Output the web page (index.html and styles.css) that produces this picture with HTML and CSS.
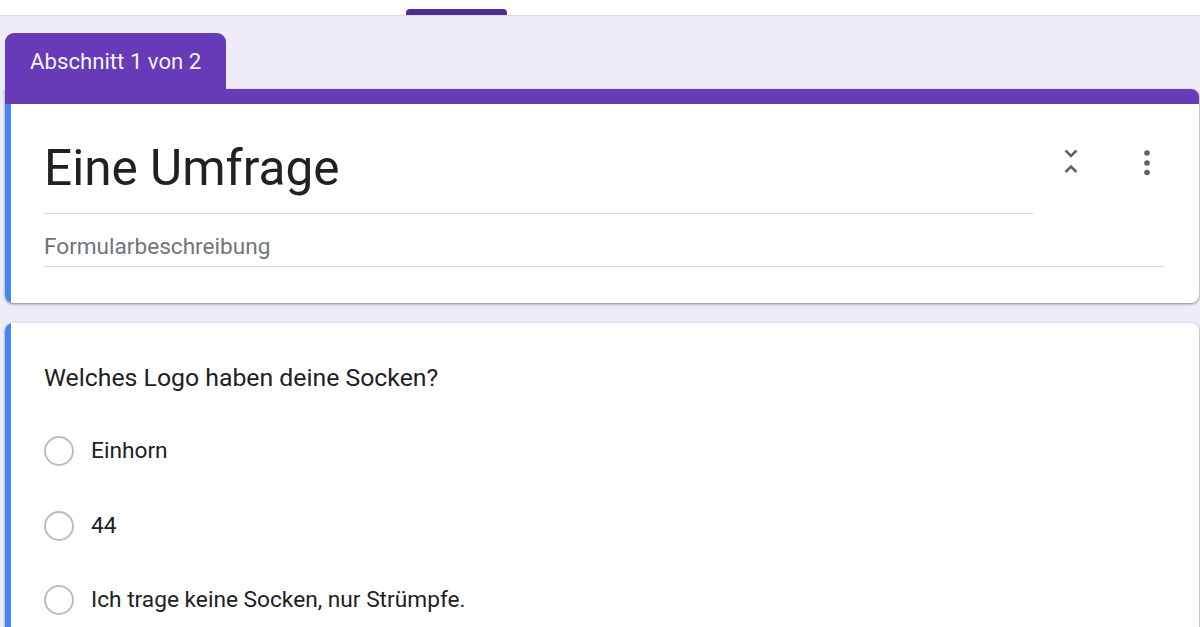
FILE: index.html
```html
<!DOCTYPE html>
<html lang="de">
<head>
<meta charset="utf-8">
<title>Eine Umfrage</title>
<link rel="stylesheet" href="styles.css">
</head>
<body>
<header class="topbar">
  <div class="indicator"></div>
</header>
<main class="form">
  <div class="tab">Abschnitt 1 von 2</div>
  <section class="card head-card">
    <div class="bar"></div>
    <div class="card-body head-body">
      <div class="title-row">
        <div class="title-field">Eine Umfrage</div>
        <div class="icons">
          <svg class="icon" width="24" height="32" viewBox="0 0 24 32" aria-hidden="true">
            <path d="M6.5 2.5 L12 8 L17.5 2.5" fill="none" stroke="#5f6368" stroke-width="2.6"/>
            <path d="M6.5 24 L12 18.5 L17.5 24" fill="none" stroke="#5f6368" stroke-width="2.6"/>
          </svg>
          <svg class="icon" width="10" height="32" viewBox="0 0 10 32" aria-hidden="true">
            <circle cx="5" cy="5" r="2.8" fill="#5f6368"/>
            <circle cx="5" cy="15" r="2.8" fill="#5f6368"/>
            <circle cx="5" cy="24.5" r="2.8" fill="#5f6368"/>
          </svg>
        </div>
      </div>
      <div class="desc-field">Formularbeschreibung</div>
    </div>
  </section>
  <section class="card q-card">
    <div class="card-body q-body">
      <div class="question">Welches Logo haben deine Socken?</div>
      <div class="option"><span class="radio"></span><span class="label">Einhorn</span></div>
      <div class="option"><span class="radio"></span><span class="label">44</span></div>
      <div class="option"><span class="radio"></span><span class="label">Ich trage keine Socken, nur Strümpfe.</span></div>
    </div>
  </section>
</main>
</body>
</html>
```
FILE: styles.css
```css
* { box-sizing: border-box; }
html, body { margin: 0; padding: 0; }
body {
  background: #f0ebf8;
  font-family: Roboto, "Liberation Sans", Arial, sans-serif;
  color: #202124;
  overflow: hidden;
}
.topbar {
  height: 16px;
  background: #ffffff;
  border-bottom: 1px solid #dadce0;
  display: flex;
  align-items: flex-end;
  padding-left: 406px;
}
.indicator {
  width: 101px;
  height: 6px;
  background: #4e2d91;
  border-radius: 4px 4px 0 0;
}
.form {
  margin-left: 5px;
  width: 1194px;
  padding-top: 17px;
}
.tab {
  display: inline-block;
  height: 57px;
  padding: 0 25px;
  background: #673ab7;
  color: #f6f2fc;
  font-size: 22.2px;
  line-height: 56px;
  border-radius: 9px 9px 0 0;
  vertical-align: top;
}
.card {
  background: #ffffff;
  border-radius: 8px;
  overflow: hidden;
  box-shadow: 0 1px 2px rgba(0,0,0,0.3), 0 1px 3px 1px rgba(0,0,0,0.12);
}
.head-card {
  border-top-left-radius: 0;
  margin-top: -1px;
}
.bar {
  height: 15px;
  background: #673ab7;
}
.card-body {
  border-left: 6px solid #4285f4;
  padding-left: 33px;
}
.head-body {
  padding-top: 32px;
  padding-bottom: 36px;
  padding-right: 35px;
}
.title-row {
  display: flex;
}
.title-field {
  flex: 0 0 990px;
  font-size: 49.5px;
  line-height: 64px;
  padding-bottom: 13px;
  border-bottom: 1px solid #dadce0;
}
.icons {
  flex: 1;
  display: flex;
  justify-content: space-between;
  align-items: flex-start;
  padding: 12px 12px 0 25px;
}
.icon { display: block; }
.desc-field {
  margin-top: 18px;
  font-size: 22.6px;
  line-height: 30px;
  color: #70757a;
  padding-bottom: 4px;
  border-bottom: 1px solid #dadce0;
}
.q-card {
  margin-top: 20px;
  border-bottom-left-radius: 0;
  border-bottom-right-radius: 0;
}
.q-body {
  padding-top: 39px;
  padding-bottom: 40px;
}
.question {
  font-size: 24.8px;
  line-height: 32px;
  margin-bottom: 20px;
}
.option {
  display: flex;
  align-items: center;
  height: 74.5px;
  gap: 17px;
}
.radio {
  width: 30px;
  height: 30px;
  border: 2px solid #bdbdbd;
  border-radius: 50%;
  flex: none;
}
.label {
  font-size: 22.7px;
  line-height: 30px;
}
```
